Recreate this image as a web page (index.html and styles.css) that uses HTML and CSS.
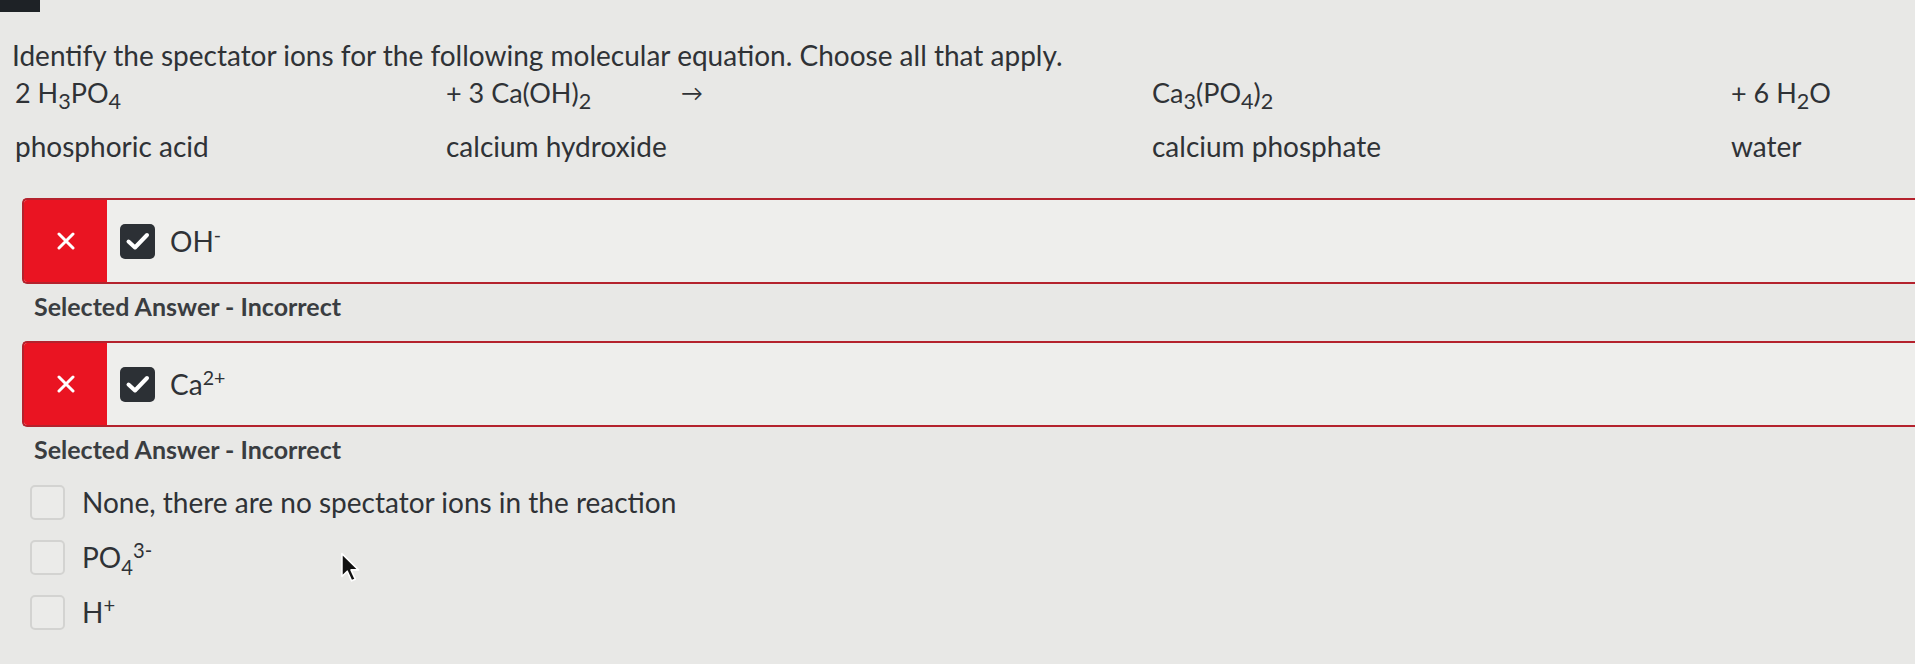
FILE: index.html
```
<!DOCTYPE html>
<html lang="en">
<head>
<meta charset="utf-8">
<title>Spectator ions</title>
<link rel="stylesheet" href="styles.css">
</head>
<body>
<div class="topbar"></div>
<main class="question">
  <p class="prompt">Identify the spectator ions for the following molecular equation. Choose all that apply.</p>
  <div class="equation">
    <div class="term">
      <div class="formula">2 H<sub>3</sub>PO<sub>4</sub></div>
      <div class="name">phosphoric acid</div>
    </div>
    <div class="term">
      <div class="formula">+ 3 Ca(OH)<sub>2</sub></div>
      <div class="name">calcium hydroxide</div>
    </div>
    <div class="term">
      <div class="formula arrow">&rarr;</div>
    </div>
    <div class="term">
      <div class="formula">Ca<sub>3</sub>(PO<sub>4</sub>)<sub>2</sub></div>
      <div class="name">calcium phosphate</div>
    </div>
    <div class="term">
      <div class="formula">+ 6 H<sub>2</sub>O</div>
      <div class="name">water</div>
    </div>
  </div>

  <ul class="answers">
    <li class="answer">
      <div class="result-box">
        <span class="mark"><svg width="18" height="18" viewBox="0 0 18 18"><path d="M2 2 L16 16 M16 2 L2 16" stroke="#fff" stroke-width="3" stroke-linecap="round"/></svg></span>
        <span class="checked"><svg width="35" height="35" viewBox="0 0 35 35"><path d="M8.5 17.5 L15 23.5 L27 11" fill="none" stroke="#fff" stroke-width="4" stroke-linecap="round" stroke-linejoin="round"/></svg></span>
        <span class="label">OH<sup>-</sup></span>
      </div>
      <div class="feedback">Selected Answer - Incorrect</div>
    </li>
    <li class="answer">
      <div class="result-box">
        <span class="mark"><svg width="18" height="18" viewBox="0 0 18 18"><path d="M2 2 L16 16 M16 2 L2 16" stroke="#fff" stroke-width="3" stroke-linecap="round"/></svg></span>
        <span class="checked"><svg width="35" height="35" viewBox="0 0 35 35"><path d="M8.5 17.5 L15 23.5 L27 11" fill="none" stroke="#fff" stroke-width="4" stroke-linecap="round" stroke-linejoin="round"/></svg></span>
        <span class="label">Ca<sup>2+</sup></span>
      </div>
      <div class="feedback">Selected Answer - Incorrect</div>
    </li>
  </ul>

  <ul class="options">
    <li class="option"><span class="box"></span><span class="opt-label">None, there are no spectator ions in the reaction</span></li>
    <li class="option"><span class="box"></span><span class="opt-label">PO<sub>4</sub><sup>3-</sup></span></li>
    <li class="option"><span class="box"></span><span class="opt-label">H<sup>+</sup></span></li>
  </ul>
</main>
<svg class="cursor" width="22" height="32" viewBox="0 0 20 30"><path d="M1.5 1.5 L1.5 23 L6.5 18 L10.5 27 L14 25.5 L10 16.8 L17 16.8 Z" fill="#111" stroke="#fff" stroke-width="1.5" stroke-linejoin="round"/></svg>
</body>
</html>
```

FILE: styles.css
```
* { box-sizing: border-box; }
html, body { margin: 0; padding: 0; }
body {
  width: 1915px;
  height: 664px;
  overflow: hidden;
  position: relative;
  background: #e8e8e6;
  color: #2f3236;
  font-family: Lato, "Open Sans", "Liberation Sans", sans-serif;
}
.topbar {
  width: 40px;
  height: 12px;
  background: #1e2226;
}
.question {
  padding-top: 28px;
}
.prompt {
  margin: 0 0 8px 12px;
  font-size: 28px;
  line-height: 30px;
}
.equation {
  display: grid;
  grid-template-columns: 431px 235px 471px 579px 1fr;
  padding-left: 15px;
}
.term {
  display: flex;
  flex-direction: column;
}
.formula {
  font-size: 27px;
  line-height: 30px;
  white-space: nowrap;
}
.formula sub {
  font-size: 0.8em;
  line-height: 0;
}
.arrow {
  font-size: 22px;
}
.name {
  margin-top: 23px;
  font-size: 28px;
  line-height: 30px;
}
.answers {
  list-style: none;
  margin: 37px 0 0;
  padding: 0 0 0 22px;
}
.result-box {
  display: flex;
  align-items: center;
  height: 86px;
  border: 2px solid #b4222d;
  border-right: none;
  border-radius: 5px 0 0 5px;
  background: #eeeeec;
}
.mark {
  align-self: stretch;
  width: 83px;
  display: flex;
  align-items: center;
  justify-content: center;
  background: #ea1422;
  border-radius: 3px 0 0 3px;
}
.checked {
  width: 35px;
  height: 35px;
  margin-left: 13px;
  border-radius: 5px;
  background: #2c3035;
  display: flex;
}
.label {
  margin-left: 15px;
  font-size: 28px;
  line-height: 30px;
}
.label sup {
  font-size: 0.7em;
  line-height: 0;
}
.feedback {
  margin: 7px 0 20px 12px;
  font-size: 25px;
  line-height: 30px;
  font-weight: 700;
  color: #3a3d41;
}
.answers .answer:last-child .feedback {
  margin-bottom: 0;
}
.options {
  list-style: none;
  margin: 20px 0 0;
  padding: 0 0 0 30px;
  display: flex;
  flex-direction: column;
  gap: 19px;
}
.option {
  display: flex;
  align-items: center;
  height: 36px;
}
.box {
  width: 35px;
  height: 35px;
  border: 2px solid #d3d3d1;
  border-radius: 5px;
  background: #ebebe9;
}
.opt-label {
  margin-left: 17px;
  font-size: 28px;
  line-height: 30px;
}
.opt-label sub,
.opt-label sup {
  font-size: 0.72em;
  line-height: 0;
}
.cursor {
  position: absolute;
  left: 340px;
  top: 552px;
}
```
